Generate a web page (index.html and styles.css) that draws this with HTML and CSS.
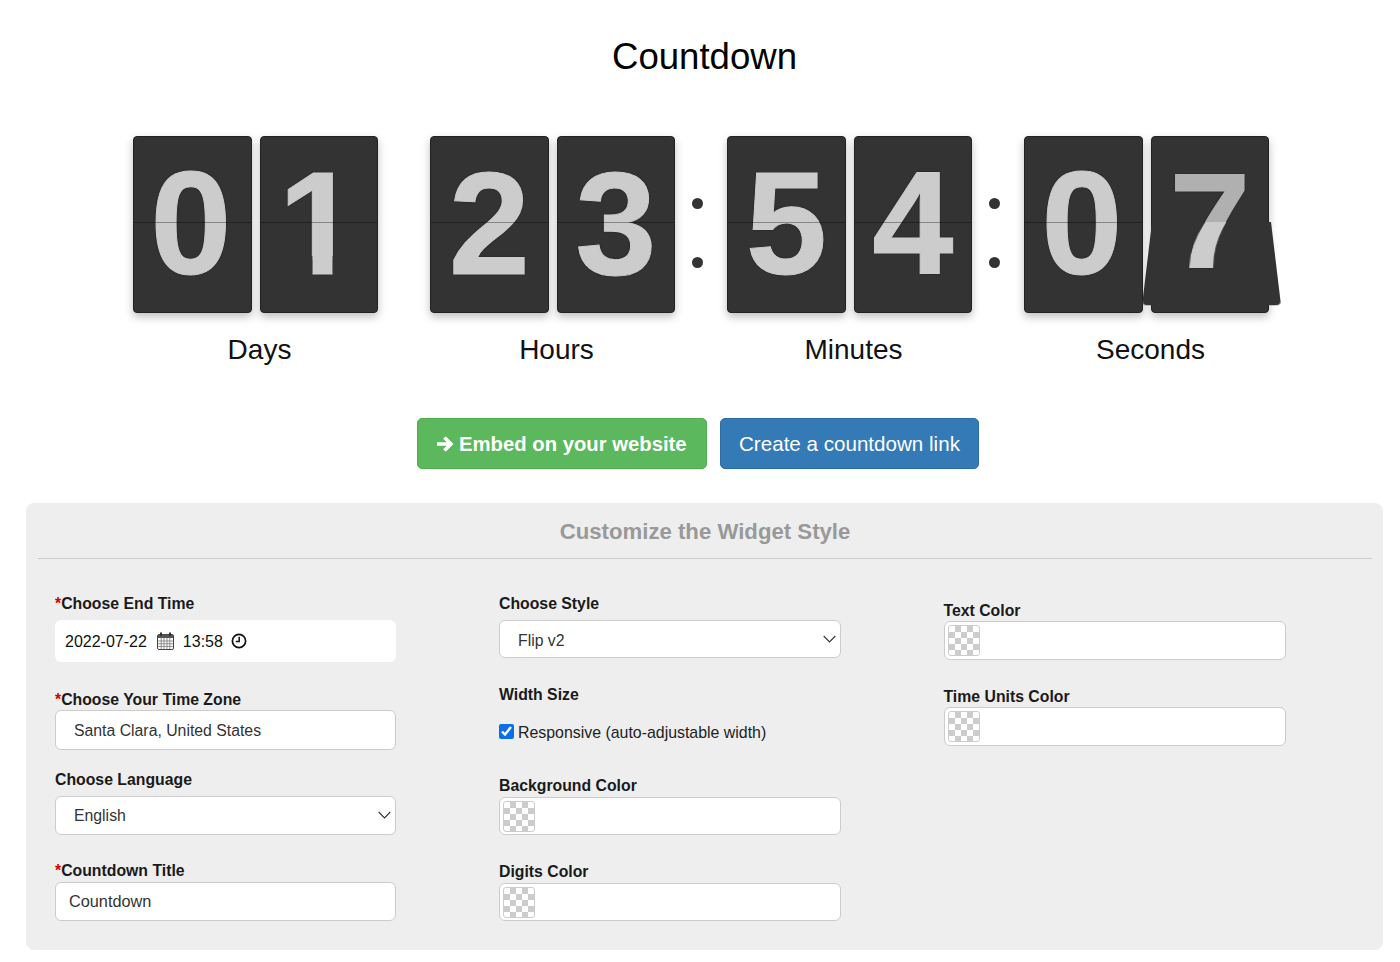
FILE: index.html
```html
<!DOCTYPE html>
<html lang="en">

<head>
    <meta charset="UTF-8">
    <title>Countdown</title>
    <link rel="stylesheet" href="styles.css">
</head>

<body>

    <h1 class="title">Countdown</h1>

    <div class="counter">
        <div class="unit">
            <div class="cards">
                <div class="card"><span class="digit digit-zero">0</span></div>
                <div class="card"><span class="digit digit-one">1</span></div>
            </div>
            <div class="unit-label">Days</div>
        </div>
        <div class="sep"></div>
        <div class="unit">
            <div class="cards">
                <div class="card"><span class="digit">2</span></div>
                <div class="card"><span class="digit">3</span></div>
            </div>
            <div class="unit-label">Hours</div>
        </div>
        <div class="sep"><i class="dot"></i><i class="dot"></i></div>
        <div class="unit">
            <div class="cards">
                <div class="card"><span class="digit">5</span></div>
                <div class="card"><span class="digit">4</span></div>
            </div>
            <div class="unit-label">Minutes</div>
        </div>
        <div class="sep"><i class="dot"></i><i class="dot"></i></div>
        <div class="unit">
            <div class="cards">
                <div class="card"><span class="digit digit-zero">0</span></div>
                <div class="card flipping">
                    <div class="half-top"><span class="digit">7</span></div>
                    <div class="flap"><span class="digit">7</span></div>
                </div>
            </div>
            <div class="unit-label">Seconds</div>
        </div>
    </div>

    <div class="actions">
        <a class="btn btn-green" href="#">
            <svg class="arrow" width="18" height="18" viewBox="0 0 18 18">
                <path d="M1 9h13.5M8.4 2.4 15 9l-6.6 6.6" fill="none" stroke="#fff" stroke-width="3.6" />
            </svg>
            Embed on your website
        </a>
        <a class="btn btn-blue" href="#">Create a countdown link</a>
    </div>

    <div class="panel">
        <h3 class="panel-title">Customize the Widget Style</h3>
        <hr class="panel-line">

        <div class="columns">
            <div class="col">
                <label class="lbl"><span class="req">*</span>Choose End Time</label>
                <div class="control date-control">
                    <span>2022-07-22</span>
                    <svg class="cal" width="17" height="18" viewBox="0 0 17 18">
                        <rect x="0.5" y="2.5" width="16" height="15" rx="1.5" fill="#fff" stroke="#444" />
                        <path d="M1 2.5h15V6H1z" fill="#555" />
                        <path d="M4 .5v3.5M13 .5v3.5" stroke="#333" stroke-width="2" />
                        <path d="M1 9h15M1 11.7h15M1 14.4h15M4.2 6v11M7 6v11M10 6v11M12.8 6v11" stroke="#777" stroke-width=".8" />
                    </svg>
                    <span class="time">13:58</span>
                    <svg class="clock" width="16" height="16" viewBox="0 0 16 16">
                        <circle cx="8" cy="8" r="6.6" fill="none" stroke="#111" stroke-width="1.7" />
                        <path d="M8.2 3.8v4.6H4.8" fill="none" stroke="#111" stroke-width="1.5" />
                    </svg>
                </div>
                <label class="lbl gap-28 tight"><span class="req">*</span>Choose Your Time Zone</label>
                <input class="control h40 pad-18" type="text" value="Santa Clara, United States">
                <label class="lbl gap-20">Choose Language</label>
                <div class="select-wrap">
                    <select class="control h39 pad-18">
                        <option>English</option>
                    </select>
                    <svg class="chevron" width="13" height="8" viewBox="0 0 13 8">
                        <path d="M.7 1l5.8 6 5.8-6" fill="none" stroke="#333" stroke-width="1.1" />
                    </svg>
                </div>
                <label class="lbl gap-26 tight-2"><span class="req">*</span>Countdown Title</label>
                <input class="control h39 pad-14" type="text" value="Countdown">
            </div>

            <div class="col">
                <label class="lbl">Choose Style</label>
                <div class="select-wrap">
                    <select class="control h38 pad-18">
                        <option>Flip v2</option>
                    </select>
                    <svg class="chevron" width="13" height="8" viewBox="0 0 13 8">
                        <path d="M.7 1l5.8 6 5.8-6" fill="none" stroke="#333" stroke-width="1.1" />
                    </svg>
                </div>
                <label class="lbl gap-27">Width Size</label>
                <label class="check-row"><input type="checkbox" checked>Responsive (auto-adjustable width)</label>
                <label class="lbl gap-34 tight-2">Background Color</label>
                <div class="control color-control h38"><span class="swatch"></span></div>
                <label class="lbl gap-27 tight-2">Digits Color</label>
                <div class="control color-control h38"><span class="swatch"></span></div>
            </div>

            <div class="col col-right">
                <label class="lbl tight">Text Color</label>
                <div class="control color-control h39"><span class="swatch"></span></div>
                <label class="lbl gap-27 tight">Time Units Color</label>
                <div class="control color-control h39"><span class="swatch"></span></div>
            </div>
        </div>
    </div>

</body>

</html>
```

FILE: styles.css
```css
html,
body {
    margin: 0;
    height: 962px;
    overflow: hidden;
}

body {
    background: #fff;
    font-family: 'Liberation Sans', Arial, sans-serif;
    color: #111;
}

.title {
    margin: 0;
    padding: 33px 0 0 9px;
    font-size: 36.6px;
    font-weight: 400;
    line-height: 48px;
    text-align: center;
    color: #000;
}

.counter {
    display: flex;
    margin-top: 55px;
    padding-left: 133px;
}

.unit {
    width: 245px;
}

.cards {
    display: flex;
    gap: 8px;
}

.card {
    position: relative;
    box-sizing: border-box;
    width: 119px;
    height: 177px;
    background: #333;
    border: 1px solid #222;
    border-radius: 4px;
    box-shadow: 0 4px 9px rgba(0, 0, 0, 0.25);
    text-align: center;
    overflow: hidden;
}

.card::after {
    content: "";
    position: absolute;
    left: 0;
    right: 0;
    top: 85px;
    height: 1px;
    background: rgba(0, 0, 0, 0.35);
}

.digit {
    display: block;
    font-size: 146px;
    font-weight: 700;
    line-height: 174px;
    color: #ccc;
    -webkit-text-stroke: 1px #ccc;
    text-shadow: 0 0 2px #111;
}

.digit-zero {
    margin-left: -3px;
}

/* Arial-width 1 has a foot, the reference one does not */
.digit-one {
    clip-path: polygon(0 0, 100% 0, 100% 119px, 72px 119px, 72px 100%, 52px 100%, 52px 119px, 0 119px);
}

.card.flipping {
    overflow: visible;
}

.half-top {
    height: 86px;
    overflow: hidden;
}

.half-top .digit {
    margin-top: 1px;
    color: #b0b0b0;
    -webkit-text-stroke: 1px #b0b0b0;
}

.flap {
    position: absolute;
    z-index: 2;
    left: -1px;
    right: -1px;
    top: 85px;
    height: 88px;
    background: #333;
    border-radius: 0 0 4px 4px;
    overflow: hidden;
    transform-origin: 50% 0;
    transform: translateX(1px) perspective(360px) rotateX(36deg);
}

.flap .digit {
    margin-top: -86px;
}

.unit-label {
    margin-top: 19px;
    padding-left: 8px;
    font-size: 28px;
    line-height: 36px;
    text-align: center;
    color: #111;
}

.sep {
    display: flex;
    flex-direction: column;
    align-items: center;
    gap: 48px;
    box-sizing: border-box;
    width: 52px;
    padding: 62px 8px 0 0;
}

.dot {
    width: 11px;
    height: 11px;
    border-radius: 50%;
    background: #333;
}

.actions {
    display: flex;
    gap: 13px;
    margin-top: 50px;
    padding-left: 417px;
}

.btn {
    display: flex;
    align-items: center;
    box-sizing: border-box;
    height: 51px;
    padding: 0 18px;
    border: 1px solid;
    border-radius: 5px;
    font-size: 20.6px;
    white-space: nowrap;
    color: #fff;
    text-decoration: none;
}

.btn-green {
    width: 290px;
    padding-top: 1px;
    background: #5cb85c;
    border-color: #4cae4c;
    font-size: 20.3px;
    font-weight: 700;
}

.btn-blue {
    width: 259px;
    background: #337ab7;
    border-color: #2e6da4;
}

.arrow {
    flex-shrink: 0;
    margin-right: 5px;
}

.panel {
    box-sizing: border-box;
    width: 1357px;
    height: 447px;
    margin: 34px 0 0 26px;
    padding: 16px 11px 0 12px;
    background: #eee;
    border-radius: 8px;
}

.panel-title {
    margin: 0;
    font-size: 22.2px;
    font-weight: 700;
    line-height: 26px;
    text-align: center;
    color: #999;
}

.panel-line {
    margin: 13px 0 0;
    border: 0;
    border-top: 1px solid #ccc;
}

.columns {
    display: grid;
    grid-template-columns: 341px 341.5px 342px;
    column-gap: 103px;
    margin-top: 35px;
    padding-left: 17px;
}

.col {
    display: flex;
    flex-direction: column;
    align-items: stretch;
}

.col-right {
    padding-top: 7px;
}

.lbl {
    display: block;
    margin-bottom: 7px;
    padding-top: 1px;
    font-size: 15.8px;
    font-weight: 700;
    line-height: 18px;
    color: #1a1a1a;
}

.lbl.tight {
    margin-bottom: 1px;
}

.lbl.tight-2 {
    margin-bottom: 2px;
}

.gap-20 {
    margin-top: 20px;
}

.gap-26 {
    margin-top: 26px;
}

.gap-27 {
    margin-top: 27px;
}

.gap-28 {
    margin-top: 28px;
}

.gap-34 {
    margin-top: 34px;
}

.req {
    color: #d40000;
}

.control {
    display: block;
    box-sizing: border-box;
    width: 100%;
    margin: 0;
    background: #fff;
    border: 1px solid #ccc;
    border-radius: 6px;
    font-family: inherit;
    font-size: 15.8px;
    color: #333;
    outline: none;
}

.h38 {
    height: 38px;
}

.h39 {
    height: 39px;
}

.h40 {
    height: 40px;
}

.pad-14 {
    padding: 0 13px;
    font-size: 16.3px;
}

.pad-18 {
    padding: 2px 18px 0;
}

.h39.pad-18 {
    padding-top: 0;
}

select.control {
    appearance: none;
    -webkit-appearance: none;
}

.select-wrap {
    position: relative;
}

.chevron {
    position: absolute;
    right: 5px;
    top: 15px;
}

.date-control {
    display: flex;
    align-items: center;
    height: 42px;
    padding: 2px 0 0 10px;
    border: 0;
    font-size: 16px;
    color: #111;
}

.cal {
    margin: -2px 0 0 10px;
}

.time {
    margin-left: 9px;
}

.clock {
    margin: -2px 0 0 8px;
}

.check-row {
    display: flex;
    align-items: center;
    height: 18px;
    margin-top: 13px;
    font-size: 15.9px;
    line-height: 18px;
    color: #222;
}

.check-row input {
    width: 15px;
    height: 15px;
    margin: 0 4px 3px 0;
    accent-color: #0a6fe8;
}

.color-control {
    display: flex;
    align-items: center;
    padding-left: 3px;
}

.swatch {
    box-sizing: border-box;
    width: 32px;
    height: 31px;
    border: 1px solid #ccc;
    border-radius: 3px;
    background: repeating-conic-gradient(#ccc 0 25%, #fff 0 50%) 0 0 / 12px 12px;
}
```
